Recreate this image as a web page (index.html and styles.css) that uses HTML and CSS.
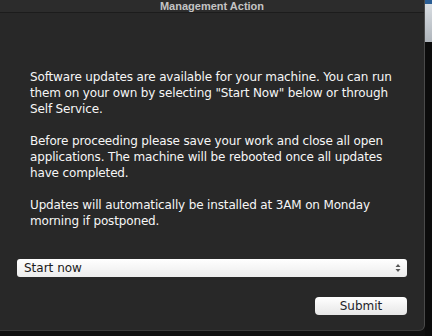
FILE: index.html
```html
<!DOCTYPE html>
<html>
<head>
<meta charset="utf-8">
<link rel="stylesheet" href="styles.css">
</head>
<body>
<div class="screen">
  <div class="window">
    <div class="titlebar"><span class="title">Management Action</span></div>
    <div class="content">
      <p class="msg">Software updates are available for your machine. You can run them on your own by selecting "Start Now" below or through Self Service.</p>
      <p class="msg">Before proceeding please save your work and close all open applications. The machine will be rebooted once all updates have completed.</p>
      <p class="msg">Updates will automatically be installed at 3AM on Monday morning if postponed.</p>
      <div class="select">
        <span class="select-label">Start now</span>
        <svg class="arrows" width="6" height="10" viewBox="0 0 6 10"><path d="M3 1 L5.5 4 H0.5 Z M3 9 L5.5 6 H0.5 Z" fill="#555"/></svg>
      </div>
      <div class="actions">
        <div class="button">Submit</div>
      </div>
    </div>
  </div>
  <div class="desktop">
    <div class="d-blue"></div>
    <div class="d-light"></div>
    <div class="d-dark"></div>
  </div>
</div>
</body>
</html>
```
FILE: styles.css
```css
html, body {
  margin: 0;
  padding: 0;
  background: #101010;
}
.screen {
  display: flex;
  width: 432px;
  height: 336px;
  overflow: hidden;
}
.window {
  width: 425px;
  height: 331px;
  flex: none;
  background: #282828;
  border-right: 1px solid #4a4a4a;
  border-bottom: 1px solid #3a3a3a;
  border-bottom-right-radius: 6px;
  box-sizing: border-box;
  display: flex;
  flex-direction: column;
}
.titlebar {
  height: 12px;
  border-bottom: 1px solid #1c1c1c;
  background: #2c2c2c;
  display: flex;
  justify-content: center;
  align-items: center;
}
.title {
  font-family: "Liberation Sans", Arial, sans-serif;
  font-weight: bold;
  font-size: 11px;
  line-height: 12px;
  color: #c4c4c4;
}
.content {
  padding: 56px 17px 0 17px;
  display: flex;
  flex-direction: column;
}
.msg {
  margin: 0 0 16px 0;
  padding: 0 0 0 13px;
  font-family: "DejaVu Sans", sans-serif;
  font-size: 12px;
  letter-spacing: -0.15px;
  line-height: 16px;
  color: #f6f6f6;
}
.msg:last-of-type {
  margin-bottom: 30px;
}
.select {
  height: 18px;
  border-radius: 3px;
  background: linear-gradient(#ffffff, #ececec);
  display: flex;
  align-items: center;
  justify-content: space-between;
  padding: 0 6px 0 7px;
}
.select-label {
  font-family: "DejaVu Sans", sans-serif;
  font-size: 12px;
  color: #1a1a1a;
}
.arrows {
  display: block;
}
.actions {
  display: flex;
  justify-content: flex-end;
  margin-top: 20px;
}
.button {
  width: 92px;
  height: 18px;
  border-radius: 4px;
  background: linear-gradient(#ffffff, #e6e6e6);
  font-family: "DejaVu Sans", sans-serif;
  font-size: 12px;
  line-height: 18px;
  text-align: center;
  color: #1e1e2a;
}
.desktop {
  flex: 1;
  display: flex;
  flex-direction: column;
}
.d-blue {
  height: 4px;
  background: #2a5d94;
}
.d-light {
  height: 38px;
  background: linear-gradient(#d8dde2, #aeb4ba);
}
.d-dark {
  flex: 1;
  background: #0c0c0c;
}
```
